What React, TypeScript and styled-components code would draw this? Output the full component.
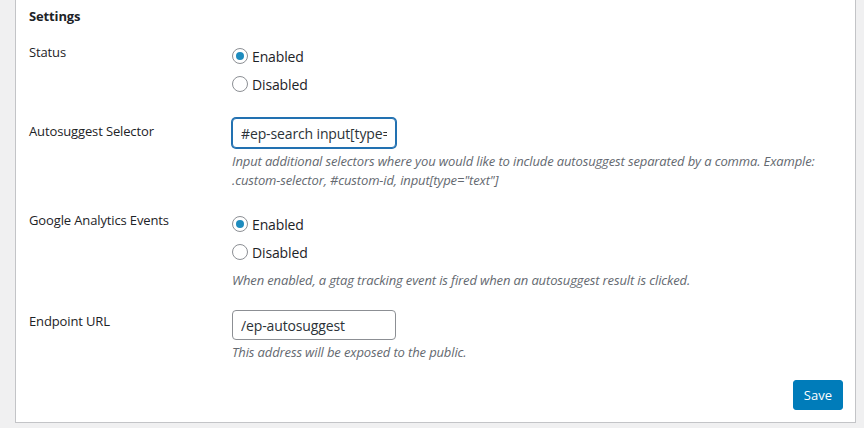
import React from "react";
import styled, { createGlobalStyle } from "styled-components";

const Global = createGlobalStyle`
  html, body { margin: 0; padding: 0; background: #f0f0f1; }
  body { font-family: "Open Sans", "Noto Sans", sans-serif; font-size: 13px; color: #1d2327; letter-spacing: -0.13px; }
  * { box-sizing: border-box; }
`;

const Panel = styled.div`
  margin-left: 15px;
  width: 841px;
  background: #fff;
  border: 1px solid #c3c4c7;
  border-top: none;
  padding: 6px 12px 12px 13px;
`;

const Heading = styled.h2`
  margin: 0 0 16px;
  font-size: 13px;
  font-weight: 700;
  line-height: 20px;
`;

const Row = styled.div<{ $gap?: number }>`
  display: grid;
  grid-template-columns: 203px 1fr;
  margin-bottom: ${(p) => p.$gap ?? 20}px;
`;

const Label = styled.div<{ $offset?: number }>`
  line-height: 20px;
  padding-top: ${(p) => p.$offset ?? 0}px;
`;

const Field = styled.div`
  display: flex;
  flex-direction: column;
  align-items: flex-start;
`;

const Option = styled.label`
  display: flex;
  align-items: center;
  height: 28px;
  font-size: 14px;
  cursor: pointer;
`;

const Radio = styled.input.attrs({ type: "radio" })`
  appearance: none;
  margin: 0 4px 0 0;
  width: 16px;
  height: 16px;
  border: 1px solid #8c8f94;
  border-radius: 50%;
  background: #fff;
  position: relative;
  &:checked::before {
    content: "";
    position: absolute;
    left: 3px;
    top: 3px;
    width: 8px;
    height: 8px;
    border-radius: 50%;
    background: #1e8cbe;
  }
`;

const TextInput = styled.input<{ $focused?: boolean }>`
  width: 164px;
  height: 30px;
  padding: 0 8px;
  font-family: inherit;
  font-size: 14px;
  letter-spacing: -0.13px;
  color: #2c3338;
  border: 1px solid ${(p) => (p.$focused ? "#2271b1" : "#8c8f94")};
  box-shadow: ${(p) => (p.$focused ? "0 0 0 1px #2271b1" : "none")};
  border-radius: 4px;
  outline: none;
  background: #fff;
`;

const Description = styled.p<{ $top?: number }>`
  margin: ${(p) => p.$top ?? 4}px 0 0;
  font-style: italic;
  color: #646970;
  line-height: 19px;
  font-size: 13px;
`;

const Footer = styled.div`
  display: flex;
  justify-content: flex-end;
  margin-top: 18px;
`;

const SaveButton = styled.button`
  height: 30px;
  padding: 0 10px;
  background: #007cba;
  color: #fff;
  border: 1px solid #007cba;
  border-radius: 3px;
  font-family: inherit;
  font-size: 13px;
  cursor: pointer;
`;

export default function App() {
  return (
    <>
      <Global />
      <Panel>
        <Heading>Settings</Heading>
        <Row>
          <Label>Status</Label>
          <Field>
            <Option><Radio name="status" defaultChecked />Enabled</Option>
            <Option><Radio name="status" />Disabled</Option>
          </Field>
        </Row>
        <Row>
          <Label $offset={3}>Autosuggest Selector</Label>
          <Field>
            <TextInput $focused defaultValue='#ep-search input[type="search"]' />
            <Description>
              Input additional selectors where you would like to include autosuggest separated by a comma. Example:
              <br />
              .custom-selector, #custom-id, input[type="text"]
            </Description>
          </Field>
        </Row>
        <Row>
          <Label>Google Analytics Events</Label>
          <Field>
            <Option><Radio name="ga" defaultChecked />Enabled</Option>
            <Option><Radio name="ga" />Disabled</Option>
            <Description $top={5}>
              When enabled, a gtag tracking event is fired when an autosuggest result is clicked.
            </Description>
          </Field>
        </Row>
        <Row $gap={0}>
          <Label $offset={1}>Endpoint URL</Label>
          <Field>
            <TextInput defaultValue="/ep-autosuggest" />
            <Description $top={3}>This address will be exposed to the public.</Description>
          </Field>
        </Row>
        <Footer>
          <SaveButton>Save</SaveButton>
        </Footer>
      </Panel>
    </>
  );
}
